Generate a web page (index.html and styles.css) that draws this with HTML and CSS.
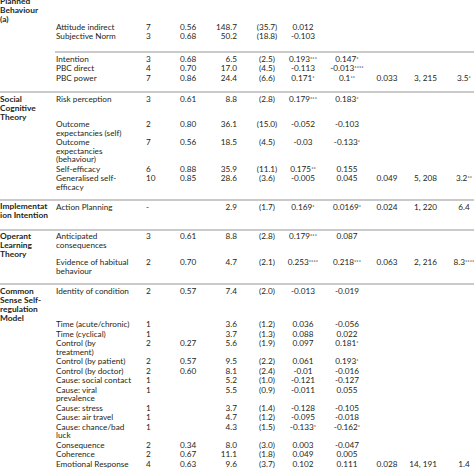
FILE: index.html
```html
<!DOCTYPE html>
<html>
<head>
<meta charset="utf-8">
<link rel="stylesheet" href="styles.css">
</head>
<body>
<div class="page">

  <section class="sec s1">
    <div class="theory theory-first">Planned<br>Behaviour<br>(a)</div>
    <div class="rows">
      <div class="g1">
        <div class="row"><span class="c2">Attitude indirect</span><span class="c3">7</span><span class="c4">0.56</span><span class="c5">148.7</span><span class="c6">(35.7)</span><span class="c7">0.012</span><span class="c8"></span><span class="c9"></span><span class="c10"></span><span class="c11"></span></div>
        <div class="row"><span class="c2">Subjective Norm</span><span class="c3">3</span><span class="c4">0.68</span><span class="c5">50.2</span><span class="c6">(18.8)</span><span class="c7">-0.103</span><span class="c8"></span><span class="c9"></span><span class="c10"></span><span class="c11"></span></div>
      </div>
      <div class="g2">
        <div class="row"><span class="c2">Intention</span><span class="c3">3</span><span class="c4">0.68</span><span class="c5">6.5</span><span class="c6">(2.5)</span><span class="c7">0.193<span class="s">***</span></span><span class="c8">0.147<span class="s">*</span></span><span class="c9"></span><span class="c10"></span><span class="c11"></span></div>
        <div class="row"><span class="c2">PBC direct</span><span class="c3">4</span><span class="c4">0.70</span><span class="c5">17.0</span><span class="c6">(4.5)</span><span class="c7">-0.113</span><span class="c8">-0.013<span class="s">****</span></span><span class="c9"></span><span class="c10"></span><span class="c11"></span></div>
        <div class="row"><span class="c2">PBC power</span><span class="c3">7</span><span class="c4">0.86</span><span class="c5">24.4</span><span class="c6">(6.6)</span><span class="c7">0.171<span class="s">*</span></span><span class="c8">0.1<span class="s">**</span></span><span class="c9">0.033</span><span class="c10">3, 215</span><span class="c11">3.5<span class="s">*</span></span></div>
      </div>
    </div>
  </section>

  <section class="sec s2">
    <div class="theory">Social<br>Cognitive<br>Theory</div>
    <div class="rows">
      <div class="row"><span class="c2">Risk perception</span><span class="c3">3</span><span class="c4">0.61</span><span class="c5">8.8</span><span class="c6">(2.8)</span><span class="c7">0.179<span class="s">***</span></span><span class="c8">0.183<span class="s">*</span></span><span class="c9"></span><span class="c10"></span><span class="c11"></span></div>
      <div class="row gap-oe"><span class="c2">Outcome<br>expectancies (self)</span><span class="c3">2</span><span class="c4">0.80</span><span class="c5">36.1</span><span class="c6">(15.0)</span><span class="c7">-0.052</span><span class="c8">-0.103</span><span class="c9"></span><span class="c10"></span><span class="c11"></span></div>
      <div class="row"><span class="c2">Outcome<br>expectancies<br>(behaviour)</span><span class="c3">7</span><span class="c4">0.56</span><span class="c5">18.5</span><span class="c6">(4.5)</span><span class="c7">-0.03</span><span class="c8">-0.133<span class="s">*</span></span><span class="c9"></span><span class="c10"></span><span class="c11"></span></div>
      <div class="row"><span class="c2">Self-efficacy</span><span class="c3">6</span><span class="c4">0.88</span><span class="c5">35.9</span><span class="c6">(11.1)</span><span class="c7">0.175<span class="s">**</span></span><span class="c8">0.155</span><span class="c9"></span><span class="c10"></span><span class="c11"></span></div>
      <div class="row"><span class="c2">Generalised self-<br>efficacy</span><span class="c3">10</span><span class="c4">0.85</span><span class="c5">28.6</span><span class="c6">(3.6)</span><span class="c7">-0.005</span><span class="c8">0.045</span><span class="c9">0.049</span><span class="c10">5, 208</span><span class="c11">3.2<span class="s">**</span></span></div>
    </div>
  </section>

  <section class="sec s3">
    <div class="theory">Implementat<br>ion Intention</div>
    <div class="rows">
      <div class="row"><span class="c2">Action Planning</span><span class="c3">-</span><span class="c4"></span><span class="c5">2.9</span><span class="c6">(1.7)</span><span class="c7">0.169<span class="s">*</span></span><span class="c8">0.0169<span class="s">*</span></span><span class="c9">0.024</span><span class="c10">1, 220</span><span class="c11">6.4</span></div>
    </div>
  </section>

  <section class="sec s4">
    <div class="theory">Operant<br>Learning<br>Theory</div>
    <div class="rows">
      <div class="row"><span class="c2">Anticipated<br>consequences</span><span class="c3">3</span><span class="c4">0.61</span><span class="c5">8.8</span><span class="c6">(2.8)</span><span class="c7">0.179<span class="s">***</span></span><span class="c8">0.087</span><span class="c9"></span><span class="c10"></span><span class="c11"></span></div>
      <div class="row gap-ev"><span class="c2">Evidence of habitual<br>behaviour</span><span class="c3">2</span><span class="c4">0.70</span><span class="c5">4.7</span><span class="c6">(2.1)</span><span class="c7">0.253<span class="s">****</span></span><span class="c8">0.218<span class="s">***</span></span><span class="c9">0.063</span><span class="c10">2, 216</span><span class="c11">8.3<span class="s">****</span></span></div>
    </div>
  </section>

  <section class="sec s5">
    <div class="theory">Common<br>Sense Self-<br>regulation<br>Model</div>
    <div class="rows">
      <div class="row"><span class="c2">Identity of condition</span><span class="c3">2</span><span class="c4">0.57</span><span class="c5">7.4</span><span class="c6">(2.0)</span><span class="c7">-0.013</span><span class="c8">-0.019</span><span class="c9"></span><span class="c10"></span><span class="c11"></span></div>
      <div class="row gap-time"><span class="c2">Time (acute/chronic)</span><span class="c3">1</span><span class="c4"></span><span class="c5">3.6</span><span class="c6">(1.2)</span><span class="c7">0.036</span><span class="c8">-0.056</span><span class="c9"></span><span class="c10"></span><span class="c11"></span></div>
      <div class="row"><span class="c2">Time (cyclical)</span><span class="c3">1</span><span class="c4"></span><span class="c5">3.7</span><span class="c6">(1.3)</span><span class="c7">0.088</span><span class="c8">0.022</span><span class="c9"></span><span class="c10"></span><span class="c11"></span></div>
      <div class="row"><span class="c2">Control (by<br>treatment)</span><span class="c3">2</span><span class="c4">0.27</span><span class="c5">5.6</span><span class="c6">(1.9)</span><span class="c7">0.097</span><span class="c8">0.181<span class="s">*</span></span><span class="c9"></span><span class="c10"></span><span class="c11"></span></div>
      <div class="row"><span class="c2">Control (by patient)</span><span class="c3">2</span><span class="c4">0.57</span><span class="c5">9.5</span><span class="c6">(2.2)</span><span class="c7">0.061</span><span class="c8">0.193<span class="s">*</span></span><span class="c9"></span><span class="c10"></span><span class="c11"></span></div>
      <div class="row"><span class="c2">Control (by doctor)</span><span class="c3">2</span><span class="c4">0.60</span><span class="c5">8.1</span><span class="c6">(2.4)</span><span class="c7">-0.01</span><span class="c8">-0.016</span><span class="c9"></span><span class="c10"></span><span class="c11"></span></div>
      <div class="row"><span class="c2">Cause: social contact</span><span class="c3">1</span><span class="c4"></span><span class="c5">5.2</span><span class="c6">(1.0)</span><span class="c7">-0.121</span><span class="c8">-0.127</span><span class="c9"></span><span class="c10"></span><span class="c11"></span></div>
      <div class="row"><span class="c2">Cause: viral<br>prevalence</span><span class="c3">1</span><span class="c4"></span><span class="c5">5.5</span><span class="c6">(0.9)</span><span class="c7">-0.011</span><span class="c8">0.055</span><span class="c9"></span><span class="c10"></span><span class="c11"></span></div>
      <div class="row"><span class="c2">Cause: stress</span><span class="c3">1</span><span class="c4"></span><span class="c5">3.7</span><span class="c6">(1.4)</span><span class="c7">-0.128</span><span class="c8">-0.105</span><span class="c9"></span><span class="c10"></span><span class="c11"></span></div>
      <div class="row"><span class="c2">Cause: air travel</span><span class="c3">1</span><span class="c4"></span><span class="c5">4.7</span><span class="c6">(1.2)</span><span class="c7">-0.095</span><span class="c8">-0.018</span><span class="c9"></span><span class="c10"></span><span class="c11"></span></div>
      <div class="row"><span class="c2">Cause: chance/bad<br>luck</span><span class="c3">1</span><span class="c4"></span><span class="c5">4.3</span><span class="c6">(1.5)</span><span class="c7">-0.133<span class="s">*</span></span><span class="c8">-0.162<span class="s">*</span></span><span class="c9"></span><span class="c10"></span><span class="c11"></span></div>
      <div class="row"><span class="c2">Consequence</span><span class="c3">2</span><span class="c4">0.34</span><span class="c5">8.0</span><span class="c6">(3.0)</span><span class="c7">0.003</span><span class="c8">-0.047</span><span class="c9"></span><span class="c10"></span><span class="c11"></span></div>
      <div class="row"><span class="c2">Coherence</span><span class="c3">2</span><span class="c4">0.67</span><span class="c5">11.1</span><span class="c6">(1.8)</span><span class="c7">0.049</span><span class="c8">0.005</span><span class="c9"></span><span class="c10"></span><span class="c11"></span></div>
      <div class="row"><span class="c2">Emotional Response</span><span class="c3">4</span><span class="c4">0.63</span><span class="c5">9.6</span><span class="c6">(3.7)</span><span class="c7">0.102</span><span class="c8">0.111</span><span class="c9">0.028</span><span class="c10">14, 191</span><span class="c11">1.4</span></div>
    </div>
  </section>

</div>
</body>
</html>
```

FILE: styles.css
```css
html, body {
  margin: 0;
  padding: 0;
  overflow: hidden;
  background: #ffffff;
}

.page {
  width: 491px;
  margin-top: -11.75px;
  font-family: Lato, "Liberation Sans", Arial, sans-serif;
  font-size: 8.2px;
  color: #231f20;
}

.sec {
  display: flex;
}

.sec + .sec {
  border-top: 2px solid #cacaca;
}

.theory {
  flex: 0 0 55px;
  font-weight: 700;
  font-size: 8.4px;
  line-height: 9px;
  padding-top: 0.25px;
}

.theory-first {
  padding-top: 8.5px;
}

.rows {
  flex: 1 1 auto;
}

.row {
  display: grid;
  grid-template-columns: 91px 34px 27px 40px 40px 32px 56px 24px 38px 54px;
  padding: 0.5px 0;
  line-height: 8.5px;
}

.c2 { padding-left: 1px; }
.c3, .c4 { text-align: left; }
.c5 { text-align: right; padding-right: 10px; }
.c6, .c7, .c8, .c9, .c11 { text-align: center; white-space: nowrap; }
.c10 { text-align: right; white-space: nowrap; }

.s {
  font-size: 5.5px;
  vertical-align: 1px;
}

/* section spacing */
.s1 { padding-bottom: 8.25px; }
.g1 { margin-top: 34px; }
.g2 {
  margin-top: 9.75px;
  border-top: 2px solid #cacaca;
  padding-top: 1.25px;
}

.s2 { padding-top: 1.55px; padding-bottom: 7.45px; }
.gap-oe { margin-top: 15.5px; }

.s3 { padding-top: 1.25px; padding-bottom: 8.75px; }

.s4 { padding-top: 0.75px; padding-bottom: 7.55px; }
.gap-ev { margin-top: 7.7px; }

.s5 { padding-top: 1.5px; }
.gap-time { margin-top: 23.75px; }
```
